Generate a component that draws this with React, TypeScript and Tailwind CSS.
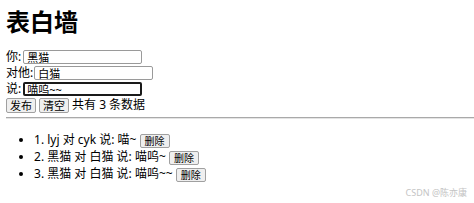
import { useState } from 'react';

interface Message {
  from: string;
  to: string;
  text: string;
}

const initialMessages: Message[] = [
  { from: 'lyj', to: 'cyk', text: '喵~' },
  { from: '黑猫', to: '白猫', text: '喵呜~' },
  { from: '黑猫', to: '白猫', text: '喵呜~~' },
];

const font = { fontFamily: '"Noto Sans", "Noto Sans CJK SC", sans-serif' };

export default function App() {
  const [from, setFrom] = useState('黑猫');
  const [to, setTo] = useState('白猫');
  const [text, setText] = useState('喵呜~~');
  const [messages, setMessages] = useState<Message[]>(initialMessages);

  const publish = () => {
    if (!from || !to || !text) return;
    setMessages([...messages, { from, to, text }]);
  };

  const clear = () => {
    setFrom('');
    setTo('');
    setText('');
  };

  return (
    <div className="relative w-[474px] h-[203px] bg-white text-black overflow-hidden" style={font}>
      <div className="pl-[6px] pt-[8px]">
        <h1 className="text-[24px] leading-[28px] font-bold">表白墙</h1>

        {/* form */}
        <div className="mt-[13px] text-[12px]">
          <div className="flex items-center h-[16px] gap-[2px]">
            <span className="leading-[16px]">你:</span>
            <input
              value={from}
              onChange={(e) => setFrom(e.target.value)}
              className="w-[119px] h-[14px] border border-[#9a9a9a] rounded-[2px] px-[3px] text-[11px] leading-[12px] outline-none"
            />
          </div>
          <div className="flex items-center h-[16px] gap-[1px]">
            <span className="leading-[16px]">对他:</span>
            <input
              value={to}
              onChange={(e) => setTo(e.target.value)}
              className="w-[119px] h-[14px] border border-[#9a9a9a] rounded-[2px] px-[3px] text-[11px] leading-[12px] outline-none"
            />
          </div>
          <div className="flex items-center h-[16px] gap-[2px]">
            <span className="leading-[16px]">说:</span>
            <input
              value={text}
              onChange={(e) => setText(e.target.value)}
              className="w-[119px] h-[14px] border-2 border-[#1a1a1a] rounded-[2px] px-[2px] text-[11px] leading-[10px] outline-none"
            />
          </div>
          <div className="flex items-center h-[16px] gap-[3px]">
            <button
              onClick={publish}
              className="h-[15px] px-[3px] border border-[#a0a0a0] rounded-[2px] bg-[#efefef] text-[11px] leading-[13px]"
            >
              发布
            </button>
            <button
              onClick={clear}
              className="h-[15px] px-[3px] border border-[#a0a0a0] rounded-[2px] bg-[#efefef] text-[11px] leading-[13px]"
            >
              清空
            </button>
            <span className="leading-[16px]">共有 {messages.length} 条数据</span>
          </div>
        </div>

        <div className="mt-[4px] h-[2px] border-t border-[#a9a9a9] border-b border-b-[#e4e4e4]" />

        {/* list */}
        <ul className="mt-[12px] pl-[28px] list-disc text-[12px]">
          {messages.map((m, i) => (
            <li key={i} className="leading-[17px] h-[17px]">
              {i + 1}. {m.from} 对 {m.to} 说: {m.text}{' '}
              <button
                onClick={() => setMessages(messages.filter((_, j) => j !== i))}
                className="h-[14px] px-[4px] border border-[#a0a0a0] rounded-[2px] bg-[#efefef] text-[10px] leading-[12px] align-middle"
              >
                删除
              </button>
            </li>
          ))}
        </ul>
      </div>

      <span className="absolute right-[7px] bottom-[4px] text-[9px] text-[#c4c4c4]">CSDN @陈亦康</span>
    </div>
  );
}
